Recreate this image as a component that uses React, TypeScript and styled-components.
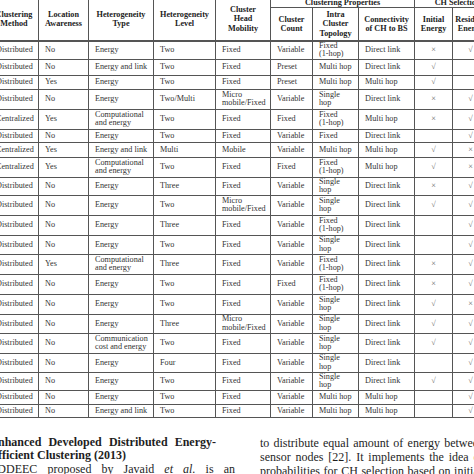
import React from 'react';
import styled, { createGlobalStyle } from 'styled-components';

const GlobalStyle = createGlobalStyle`
  html, body {
    margin: 0;
    padding: 0;
    background: #fff;
    overflow: hidden;
  }
`;

type Row = { h: number; cells: string[] };

const COLS = [49, 50, 65, 62, 55, 42, 46, 56, 38, 36];

const ROWS: Row[] = [
  { h: 18, cells: ['Distributed', 'No', 'Energy', 'Two', 'Fixed', 'Variable', 'Fixed\n(1-hop)', 'Direct link', '×', '√'] },
  { h: 16, cells: ['Distributed', 'No', 'Energy and link', 'Two', 'Fixed', 'Preset', 'Multi hop', 'Direct link', '√', ''] },
  { h: 14, cells: ['Distributed', 'Yes', 'Energy', 'Two', 'Fixed', 'Preset', 'Multi hop', 'Multi hop', '√', ''] },
  { h: 20, cells: ['Distributed', 'No', 'Energy', 'Two/Multi', 'Micro\nmobile/Fixed', 'Variable', 'Single\nhop', 'Direct link', '×', '√'] },
  { h: 20, cells: ['Centralized', 'Yes', 'Computational\nand energy', 'Two', 'Fixed', 'Fixed', 'Fixed\n(1-hop)', 'Multi hop', '×', '√'] },
  { h: 13, cells: ['Distributed', 'No', 'Energy', 'Two', 'Fixed', 'Variable', 'Fixed', 'Direct link', '', '√'] },
  { h: 15, cells: ['Centralized', 'Yes', 'Energy and link', 'Multi', 'Mobile', 'Variable', 'Multi hop', 'Multi hop', '√', '×'] },
  { h: 20, cells: ['Centralized', 'Yes', 'Computational\nand energy', 'Two', 'Fixed', 'Fixed', 'Fixed\n(1-hop)', 'Multi hop', '√', '×'] },
  { h: 18, cells: ['Distributed', 'No', 'Energy', 'Three', 'Fixed', 'Variable', 'Single\nhop', 'Direct link', '×', '√'] },
  { h: 20, cells: ['Distributed', 'No', 'Energy', 'Two', 'Micro\nmobile/Fixed', 'Variable', 'Single\nhop', 'Direct link', '√', '√'] },
  { h: 20, cells: ['Distributed', 'No', 'Energy', 'Three', 'Fixed', 'Variable', 'Fixed\n(1-hop)', 'Direct link', '', '√'] },
  { h: 19, cells: ['Distributed', 'No', 'Energy', 'Two', 'Fixed', 'Variable', 'Single\nhop', 'Direct link', '', '√'] },
  { h: 20, cells: ['Distributed', 'Yes', 'Computational\nand energy', 'Three', 'Fixed', 'Variable', 'Fixed\n(1-hop)', 'Direct link', '×', '√'] },
  { h: 20, cells: ['Distributed', 'No', 'Energy', 'Two', 'Fixed', 'Fixed', 'Fixed\n(1-hop)', 'Direct link', '×', '√'] },
  { h: 20, cells: ['Distributed', 'No', 'Energy', 'Two', 'Fixed', 'Variable', 'Single\nhop', 'Direct link', '√', '×'] },
  { h: 19, cells: ['Distributed', 'No', 'Energy', 'Three', 'Micro\nmobile/Fixed', 'Variable', 'Single\nhop', 'Direct link', '√', '√'] },
  { h: 20, cells: ['Distributed', 'No', 'Communication\ncost and energy', 'Two', 'Fixed', 'Variable', 'Single\nhop', 'Direct link', '√', '√'] },
  { h: 19, cells: ['Distributed', 'No', 'Energy', 'Four', 'Fixed', 'Variable', 'Single\nhop', 'Direct link', '', '√'] },
  { h: 18, cells: ['Distributed', 'No', 'Energy', 'Two', 'Fixed', 'Variable', 'Single\nhop', 'Direct link', '√', '√'] },
  { h: 14, cells: ['Distributed', 'No', 'Energy', 'Two', 'Fixed', 'Variable', 'Multi hop', 'Multi hop', '', '√'] },
  { h: 13, cells: ['Distributed', 'No', 'Energy and link', 'Two', 'Fixed', 'Variable', 'Multi hop', 'Multi hop', '', '√'] },
];

const Page = styled.div`
  width: 474px;
  height: 474px;
  overflow: hidden;
  background: #fff;
`;

const TableWrap = styled.div`
  margin-left: -11px;
  margin-top: -3px;
`;

const Table = styled.table`
  border-collapse: collapse;
  table-layout: fixed;
  width: ${COLS.reduce((a, b) => a + b, 0)}px;
  font-family: 'Liberation Serif', 'Times New Roman', serif;
  font-size: 8.2px;
  line-height: 8.5px;
  color: #333;
`;

const HeadRow = styled.tr<{ $h: number }>`
  height: ${(p) => p.$h}px;
`;

const Head = styled.th<{ $last?: boolean; $shift?: number }>`
  padding: 0 1px 0 ${(p) => 1 + (p.$shift || 0)}px;
  border: 1px solid #555;
  border-bottom: ${(p) => (p.$last ? '2px solid #555' : '1px solid #555')};
  font-weight: bold;
  line-height: 9.3px;
  color: #222;
  text-align: center;
  vertical-align: middle;
  white-space: pre;
`;

const BodyRow = styled.tr<{ $h: number }>`
  height: ${(p) => p.$h}px;
`;

const Cell = styled.td<{ $mark?: boolean }>`
  padding: 0 1px 0 ${(p) => (p.$mark ? 1 : 6)}px;
  border: 1px solid #555;
  text-align: ${(p) => (p.$mark ? 'center' : 'left')};
  color: ${(p) => (p.$mark ? '#666' : '#333')};
  vertical-align: middle;
  white-space: pre;
  overflow: hidden;
`;

const TextArea = styled.div`
  display: flex;
  align-items: flex-start;
  font-family: 'Liberation Serif', 'Times New Roman', serif;
  font-size: 12px;
  color: #1e1e1e;
`;

const LeftCol = styled.div`
  flex-shrink: 0;
  width: 245px;
  margin-left: -10px;
  margin-top: 18px;
  line-height: 13.5px;
`;

const RightCol = styled.div`
  flex-shrink: 0;
  width: 243px;
  margin-left: 25px;
  margin-top: 18px;
  line-height: 14px;
`;

const Heading = styled.div<{ $justify?: boolean }>`
  font-weight: bold;
  margin-right: 19px;
  text-align: ${(p) => (p.$justify ? 'justify' : 'left')};
  text-align-last: ${(p) => (p.$justify ? 'justify' : 'left')};
`;

const Line = styled.div`
  text-align: justify;
  text-align-last: justify;
`;

const COL_HEADS = ['Clustering\nMethod', 'Location\nAwareness', 'Heterogeneity\nType', 'Heterogeneity\nLevel', 'Cluster\nHead\nMobility'];
const SUB_HEADS = ['Cluster\nCount', 'Intra\nCluster\nTopology', 'Connectivity\nof CH to BS', 'Initial\nEnergy', 'Residual\nEnergy'];

export default function App() {
  return (
    <Page>
      <GlobalStyle />
      <TableWrap>
        <Table>
          <colgroup>
            {COLS.map((w, i) => (
              <col key={i} style={{ width: w }} />
            ))}
          </colgroup>
          <thead>
            <HeadRow $h={9}>
              {COL_HEADS.map((t) => (
                <Head key={t} rowSpan={2} $last>
                  {t}
                </Head>
              ))}
              <Head colSpan={3}>Clustering Properties</Head>
              <Head colSpan={2} $shift={12}>CH Selection</Head>
            </HeadRow>
            <HeadRow $h={33}>
              {SUB_HEADS.map((t) => (
                <Head key={t} $last>
                  {t}
                </Head>
              ))}
            </HeadRow>
          </thead>
          <tbody>
            {ROWS.map((r, i) => (
              <BodyRow key={i} $h={r.h}>
                {r.cells.map((c, j) => (
                  <Cell key={j} $mark={j >= 8}>
                    {c}
                  </Cell>
                ))}
              </BodyRow>
            ))}
          </tbody>
        </Table>
      </TableWrap>
      <TextArea>
        <LeftCol>
          <Heading $justify>Enhanced Developed Distributed Energy-</Heading>
          <Heading>Efficient Clustering (2013)</Heading>
          <Line>
            EDDEEC proposed by Javaid <i>et al.</i> is an
          </Line>
        </LeftCol>
        <RightCol>
          <Line>to distribute equal amount of energy between the</Line>
          <Line>sensor nodes [22]. It implements the idea of the</Line>
          <Line>probabilities for CH selection based on initial and</Line>
        </RightCol>
      </TextArea>
    </Page>
  );
}
